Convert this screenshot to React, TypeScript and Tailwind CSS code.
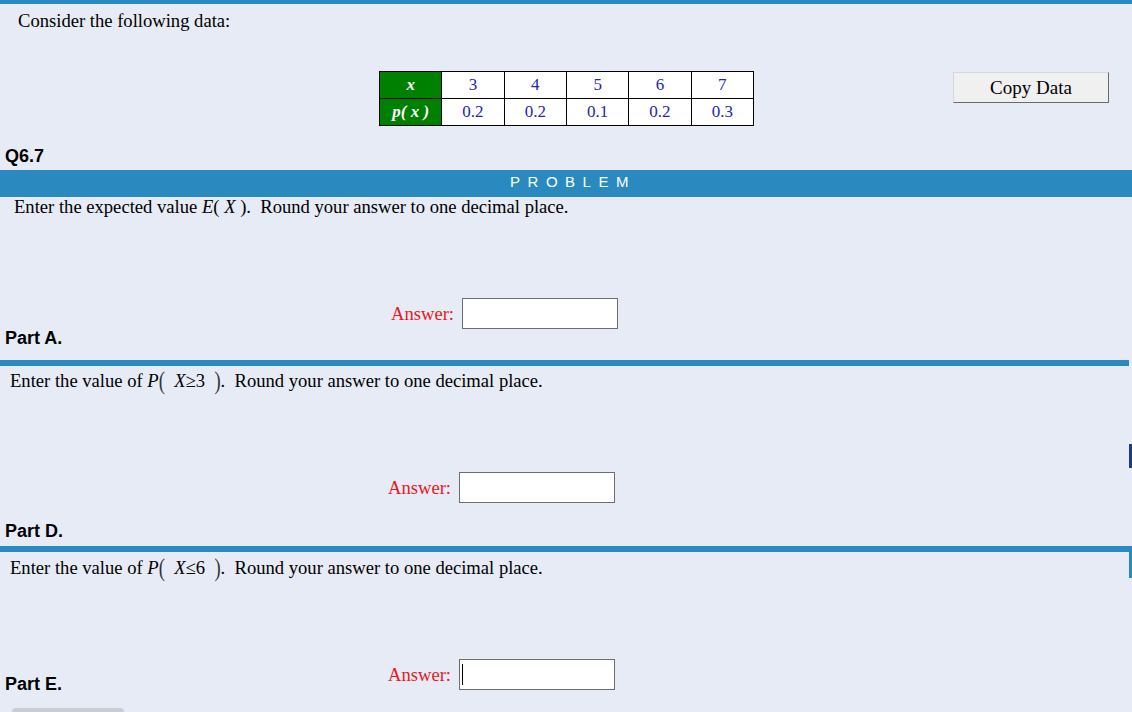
import React from 'react';

const serif = { fontFamily: '"Liberation Serif", "Times New Roman", serif' };
const sans = { fontFamily: '"Liberation Sans", Arial, sans-serif' };

const xs = [3, 4, 5, 6, 7];
const ps = ['0.2', '0.2', '0.1', '0.2', '0.3'];

function Paren({ c }: { c: string }) {
  return <span className="inline-block scale-y-[1.35] font-light text-[#333]">{c}</span>;
}

function AnswerRow({ left, caret }: { left: number; caret?: boolean }) {
  return (
    <div className="flex items-center" style={{ paddingLeft: left }}>
      <span className="w-[71px] whitespace-nowrap text-[18.6px] leading-[20px] text-[#e8191c]">Answer:</span>
      <div className="relative h-[31px] w-[156px] border border-[#6e6e6e] bg-white">
        {caret && <div className="absolute left-[2px] top-[4px] h-[21px] w-px bg-black" />}
      </div>
    </div>
  );
}

function PartLabel({ children }: { children: React.ReactNode }) {
  return (
    <div className="pl-[5px] text-[18px] font-bold leading-[20px] text-black" style={sans}>
      {children}
    </div>
  );
}

export default function App() {
  return (
    <div className="relative h-[712px] w-[1132px] overflow-hidden bg-[#e7ebf5] text-black" style={serif}>
      <div className="h-[4px] w-full bg-[#2a8abf]" />

      {/* data block */}
      <div className="flex h-[166px] flex-col">
        <div className="pl-[18px] pt-[7px] text-[18.6px] leading-[20px]">Consider the following data:</div>
        <div className="mt-[40px] flex items-start pl-[379px] pr-[23px]">
          <table className="w-[375px] table-fixed border-collapse text-[17px] leading-[26px]">
            <tbody>
              <tr>
                <td className="border border-black bg-[#008000] text-center font-bold italic text-white">x</td>
                {xs.map(v => (
                  <td key={v} className="border border-black bg-white text-center text-[#2424b8]">{v}</td>
                ))}
              </tr>
              <tr>
                <td className="whitespace-nowrap border border-black bg-[#008000] text-center font-bold italic text-white">
                  p(&nbsp;x&nbsp;)
                </td>
                {ps.map((v, i) => (
                  <td key={i} className="border border-black bg-white text-center text-[#2424b8]">{v}</td>
                ))}
              </tr>
            </tbody>
          </table>
          <button
            className="ml-auto mt-[1px] h-[31px] w-[156px] border border-t-[#d8d8d8] border-l-[#d8d8d8] border-b-[#6a6a6a] border-r-[#6a6a6a] bg-[#f0f0f0] text-[19px] leading-[20px] text-black"
            style={serif}
          >
            Copy Data
          </button>
        </div>
        <div className="mt-[20px]">
          <PartLabel>Q6.7</PartLabel>
        </div>
      </div>

      {/* problem header */}
      <div className="flex h-[27px] w-full items-center justify-center bg-[#2a8abf] pl-[14px] pb-[3px]">
        <span className="text-[15px] tracking-[7.5px] text-white" style={sans}>PROBLEM</span>
      </div>

      {/* problem */}
      <div className="flex h-[163px] flex-col">
        <div className="whitespace-pre pl-[14px] text-[18.6px] leading-[20px]">
          Enter the expected value <i>E</i>( <i>X</i> ).  Round your answer to one decimal place.
        </div>
        <div className="mt-[81px]">
          <AnswerRow left={391} />
        </div>
        <div className="-mt-[1px]">
          <PartLabel>Part A.</PartLabel>
        </div>
      </div>

      <div className="h-[6px] w-[1129px] bg-[#2a8abf]" />

      {/* part A content */}
      <div className="flex h-[180px] flex-col">
        <div className="whitespace-pre pl-[10px] pt-[5px] text-[18.6px] leading-[20px]">
          Enter the value of <i>P</i>
          <Paren c="(" />  <i>X</i>≥3  <Paren c=")" />.  Round your answer to one decimal place.
        </div>
        <div className="mt-[81px]">
          <AnswerRow left={388} />
        </div>
        <div className="mt-[18px]">
          <PartLabel>Part D.</PartLabel>
        </div>
      </div>

      <div className="h-[6px] w-[1129px] bg-[#2a8abf]" />

      {/* part D content */}
      <div className="flex flex-col">
        <div className="whitespace-pre pl-[10px] pt-[6px] text-[18.6px] leading-[20px]">
          Enter the value of <i>P</i>
          <Paren c="(" />  <i>X</i>≤6  <Paren c=")" />.  Round your answer to one decimal place.
        </div>
        <div className="mt-[81px] flex items-start">
          <div className="w-[388px] pt-[15px]">
            <PartLabel>Part E.</PartLabel>
          </div>
          <AnswerRow left={0} caret />
        </div>
      </div>

      {/* edge artifacts from window behind */}
      <div className="absolute right-0 top-[444px] h-[24px] w-[3px] bg-[#1e3c7c]" />
      <div className="absolute right-0 top-[546px] h-[32px] w-[3px] bg-[#2a8abf]" />
      <div className="absolute bottom-0 left-[12px] h-[4px] w-[112px] rounded-t-full bg-[#c9cdd4]" />
    </div>
  );
}
